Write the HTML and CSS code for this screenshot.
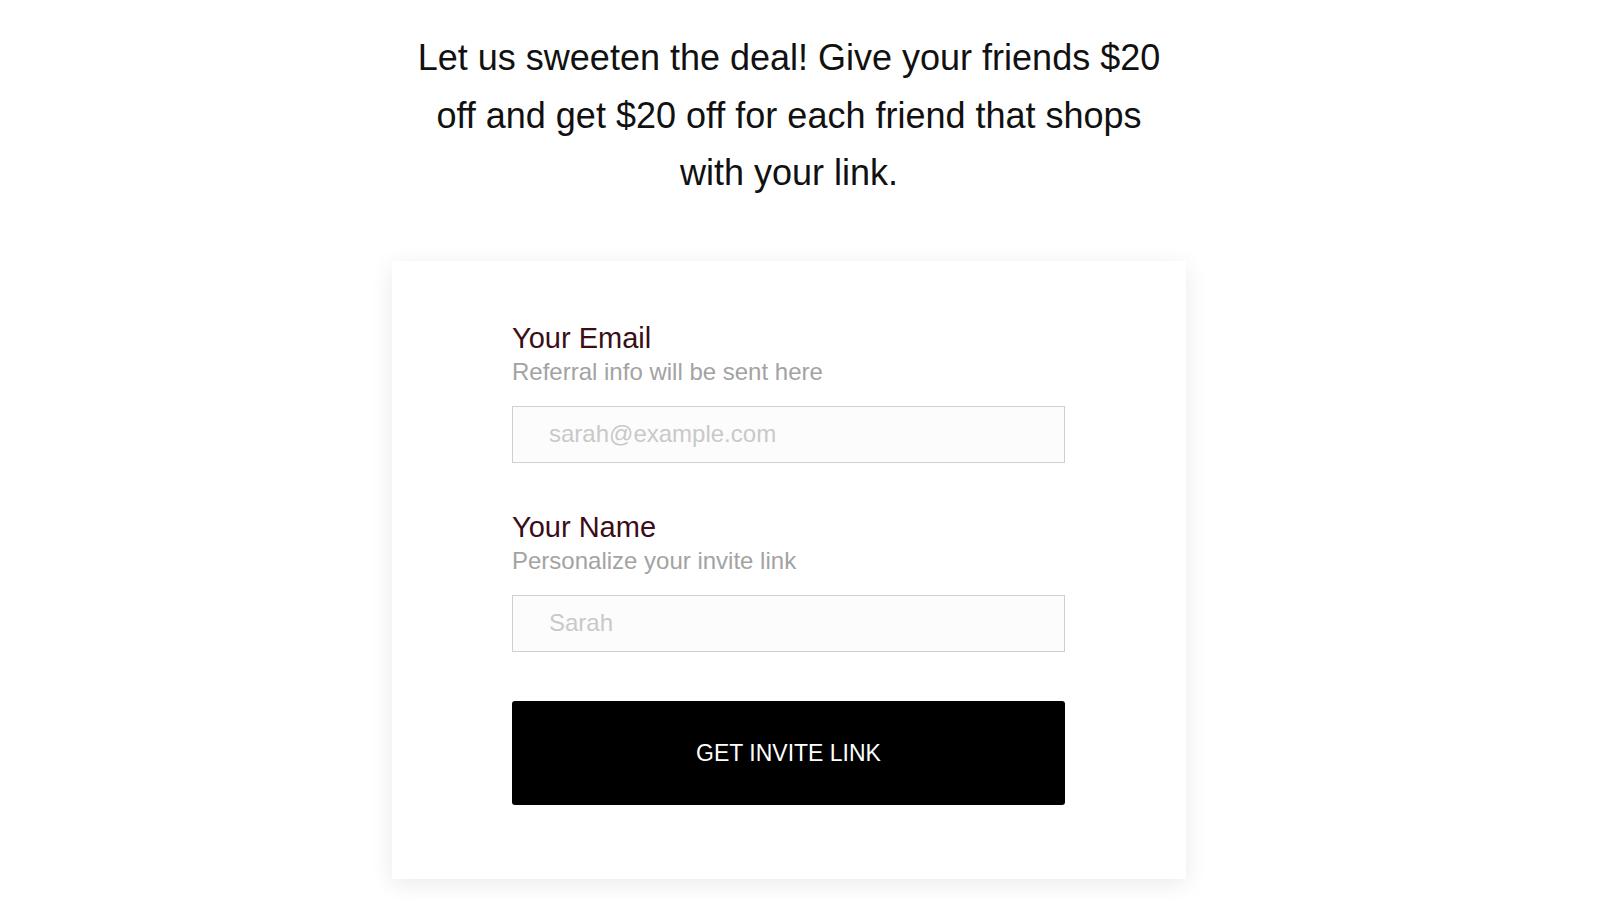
FILE: index.html
```html
<!DOCTYPE html>
<html lang="en">
<head>
<meta charset="utf-8">
<title>Referral</title>
<link rel="stylesheet" href="styles.css">
</head>
<body>
<main class="page">
  <p class="intro">Let us sweeten the deal! Give your friends $20 off and get $20 off for each friend that shops with your link.</p>
  <form class="card">
    <div class="field">
      <label class="label" for="email">Your Email</label>
      <div class="hint">Referral info will be sent here</div>
      <input class="input" id="email" type="email" placeholder="sarah@example.com">
    </div>
    <div class="field">
      <label class="label" for="name">Your Name</label>
      <div class="hint">Personalize your invite link</div>
      <input class="input" id="name" type="text" placeholder="Sarah">
    </div>
    <button class="btn" type="button">GET INVITE LINK</button>
  </form>
</main>
</body>
</html>
```

FILE: styles.css
```css
html, body {
  margin: 0;
  padding: 0;
  background: #ffffff;
}
body {
  font-family: "Liberation Sans", Arial, Helvetica, sans-serif;
  color: #111;
}
.page {
  width: 1578px;
  display: flex;
  flex-direction: column;
  align-items: center;
  padding-top: 29px;
  padding-bottom: 20px;
}
.intro {
  margin: 0;
  width: 760px;
  text-align: center;
  font-size: 36px;
  line-height: 57.6px;
  color: #111;
}
.card {
  margin-top: 59px;
  width: 794px;
  box-sizing: border-box;
  padding: 62px 121px 74px 120px;
  background: #fff;
  box-shadow: 0 5px 22px rgba(0, 0, 0, 0.085);
  display: flex;
  flex-direction: column;
}
.field {
  display: flex;
  flex-direction: column;
  margin-bottom: 49px;
}
.label {
  font-size: 29px;
  line-height: 30px;
  color: #3a0d17;
}
.hint {
  margin-top: 4px;
  font-size: 24px;
  line-height: 29px;
  color: #a3a3a3;
}
.input {
  margin-top: 20px;
  height: 57px;
  box-sizing: border-box;
  border: 1px solid #cfcfcf;
  background: #fcfcfc;
  padding: 0 36px;
  font-family: "Liberation Sans", Arial, Helvetica, sans-serif;
  font-size: 24px;
  color: #333;
  outline: none;
  border-radius: 0;
}
.input::placeholder {
  color: #c9c9c9;
}
.btn {
  height: 104px;
  border: none;
  border-radius: 3px;
  background: #000;
  color: #fff;
  padding-top: 3px;
  font-family: "Liberation Sans", Arial, Helvetica, sans-serif;
  font-size: 23px;
  cursor: pointer;
}
```
